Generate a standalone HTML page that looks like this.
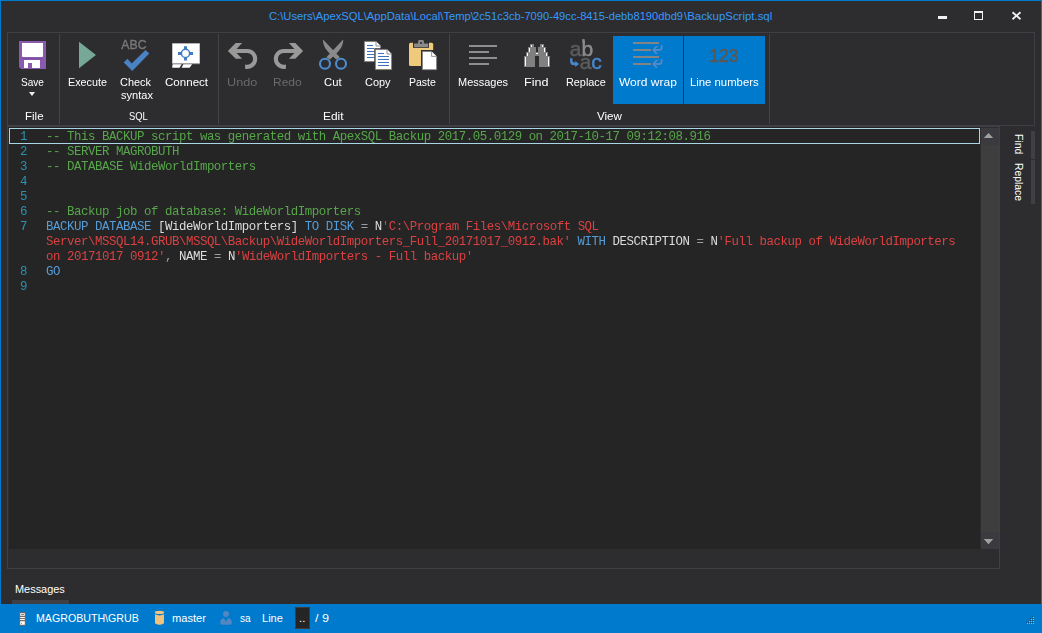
<!DOCTYPE html>
<html>
<head>
<meta charset="utf-8">
<title>BackupScript.sql</title>
<style>
*{box-sizing:border-box;margin:0;padding:0}
html,body{width:1042px;height:633px;overflow:hidden;background:#2d2d30}
body{position:relative;font-family:"Liberation Sans",sans-serif;font-size:12px;color:#f1f1f1}
.abs{position:absolute}
#frame{position:absolute;left:0;top:0;width:1042px;height:633px;border:1px solid #007acc;pointer-events:none;z-index:50}
#title{position:absolute;left:0;top:9px;width:1042px;text-align:center;color:#3399ff;font-size:12px;line-height:14px;white-space:nowrap}
#ribbon{position:absolute;left:7px;top:32px;width:1028px;height:94px;border:1px solid #3f3f46}
.sep{position:absolute;top:34px;width:1px;height:90px;background:#444447}
.lbl{position:absolute;top:75px;text-align:center;line-height:14px;font-size:12px;white-space:nowrap;transform:translateX(-50%);color:#f1f1f1}
.lbl.dis{color:#6a6a6a}
.t{position:absolute;transform-origin:0 0;line-height:14px;font-size:11.5px;white-space:nowrap;color:#fff}
.t.dis{color:#6a6a6a}
.t.w{color:#fff}
.grp{position:absolute;top:109px;text-align:center;line-height:14px;font-size:12px;transform:translateX(-50%);color:#f1f1f1}
.tog{position:absolute;top:36px;height:68px;background:#007acc}
#edwrap{position:absolute;left:7px;top:126px;width:993px;height:443px;border:1px solid #3f3f46}
#editor{position:absolute;left:9px;top:127px;width:971px;height:422px;background:#252526}
#vscroll{position:absolute;left:981px;top:128px;width:18px;height:421px;background:#3e3e3f}
#curline{position:absolute;left:9px;top:128px;width:971px;height:16px;border:1px solid #a9d6e6}
.ln,.code{position:absolute;font-family:"Liberation Mono",monospace;font-size:12.4px;letter-spacing:-0.441px;line-height:15px;white-space:pre}
.ln{left:20px;color:#2b91af}
.code{left:46px;color:#dcdcdc}
.c{color:#57a64a}.k{color:#569cd6}.s{color:#dc4141}.o{color:#9e9e9e}
#status{position:absolute;left:0;top:604px;width:1042px;height:29px;background:#007acc}
.st{position:absolute;top:611px;line-height:14px;font-size:12px;color:#fff;white-space:nowrap}
.vt{position:absolute;font-size:12px;line-height:14px;color:#f1f1f1;white-space:nowrap;transform-origin:0 0;transform:rotate(90deg)}
</style>
</head>
<body>
<span id="t_title" class="t" style="left:268.80px;top:9px;transform:scaleX(0.9744);color:#3399ff">C:\Users\ApexSQL\AppData\Local\Temp\</span>
<span id="t_title2" class="t" style="left:472.88px;top:9px;transform:scaleX(0.9691);color:#3399ff">2c51c3cb-7090-49cc-8415-debb8190dbd9</span>
<span id="t_title3" class="t" style="left:684.00px;top:9px;transform:scaleX(0.9933);color:#3399ff">\BackupScript.sql</span>

<!-- window buttons -->
<div class="abs" style="left:938px;top:16px;width:9px;height:3px;background:#f1f1f1"></div>
<div class="abs" style="left:974px;top:11px;width:9px;height:9px;border:1px solid #f1f1f1;border-top-width:2px"></div>
<svg class="abs" style="left:1011px;top:11px" width="11" height="10" viewBox="0 0 11 10"><path d="M1.5 1.2 L9.5 8.2 M9.5 1.2 L1.5 8.2" stroke="#f1f1f1" stroke-width="1.8" fill="none"/></svg>

<div id="ribbon"></div>
<div class="sep" style="left:59px"></div>
<div class="sep" style="left:218px"></div>
<div class="sep" style="left:449px"></div>
<div class="sep" style="left:769px"></div>

<div class="tog" style="left:613px;width:70px"></div>
<div class="tog" style="left:684px;width:81px"></div>

<!-- ICONS -->
<svg class="abs" style="left:0;top:0;will-change:transform" width="1042" height="130" viewBox="0 0 1042 130">
<!-- save -->
<path d="M19 41H46V69H21L19 67Z" fill="#8b59ad"/>
<path d="M22 43H43V56Q43 57 42 57H23Q22 57 22 56Z" fill="#fff"/>
<rect x="22" y="58" width="21" height="1.5" fill="#7f4fa1"/>
<rect x="24" y="60" width="16" height="8" fill="#fff"/>
<rect x="28" y="63" width="4" height="5" fill="#8b59ad"/>
<!-- execute -->
<path d="M79 41.8L96 55L79 68.2Z" fill="#76a797"/>
<!-- check syntax -->
<text x="121.3" y="48.9" font-family="Liberation Sans, sans-serif" font-size="12.4" fill="#787878" stroke="#787878" stroke-width="0.35" textLength="25.2" lengthAdjust="spacingAndGlyphs">ABC</text>
<path d="M123.7 62.4L127.4 58.8L131.7 63.6L145.5 49.9L149.3 53.4L132.2 71.1Z" fill="#4a82c3"/>
<!-- connect -->
<rect x="172" y="43.1" width="28" height="21.1" fill="#8c8c8c"/>
<rect x="172.5" y="43.6" width="27" height="19.6" fill="#fff"/>
<path d="M172.6 64.3H181.6L179.6 67.7H172.2Z" fill="#fff"/>
<path d="M183.4 64.3H192.2L189.6 67.7H181.6Z" fill="#fff"/>
<circle cx="185.5" cy="53.4" r="4.1" fill="none" stroke="#3f7cc0" stroke-width="1.5"/>
<path d="M184 46.2h3v3.4h-3zM184 57.2h3v3.4h-3zM178 52h3.6v3h-3.6zM189.4 52h3.6v3h-3.6z" fill="#3f7cc0"/>
<!-- undo -->
<path id="undo" d="M227.9 50.9L235.7 43.1H242.1L236.6 48.9H247.2A10 10 0 1 1 245.1 68.68V64.41A5.9 5.9 0 1 0 247.2 53H236.6L242.1 58.8H235.7Z" fill="#999"/>
<!-- redo -->
<path d="M227.9 50.9L235.7 43.1H242.1L236.6 48.9H247.2A10 10 0 1 1 245.1 68.68V64.41A5.9 5.9 0 1 0 247.2 53H236.6L242.1 58.8H235.7Z" fill="#999" transform="translate(531 0) scale(-1 1)"/>
<!-- cut -->
<path d="M323.2 39.7L339.9 57.2L336.3 59.4L330.1 53.7C326.5 50.4 323.2 46 322.9 39.9Z" fill="#8a8a8a"/>
<path d="M343.0 39.7L326.3 57.2L329.9 59.4L336.1 53.7C339.7 50.4 343.0 46 343.3 39.9Z" fill="#8a8a8a"/>
<circle cx="325" cy="63.7" r="5" fill="none" stroke="#4b8dd2" stroke-width="2.1"/>
<circle cx="341" cy="63.7" r="5" fill="none" stroke="#4b8dd2" stroke-width="2.1"/>
<!-- copy -->
<g stroke="#7a7a7a" stroke-width="0.8" fill="#fff">
<path d="M364.4 41.4H376L380.6 46V61.6H364.4Z"/><path d="M376 41.4V46H380.6" fill="#fff"/>
</g>
<path d="M367 45h6v1h-6zM367 48h7v1h-7zM367 51h7v1h-7zM367 54h7v1h-7zM367 57h7v1h-7z" fill="#3b74ba"/>
<path d="M374.3 48.3H387.4L392.7 53.6V70.7H374.3Z" fill="#2d2d30"/>
<g stroke="#7a7a7a" stroke-width="0.8" fill="#fff">
<path d="M375.4 49.4H387L391.6 54V69.6H375.4Z"/><path d="M387 49.4V54H391.6" fill="#fff"/>
</g>
<path d="M378 53h6v1h-6zM378 56h11v1h-11zM378 59h11v1h-11zM378 62h11v1h-11zM378 65h11v1h-11z" fill="#3b74ba"/>
<!-- paste -->
<rect x="409" y="42.7" width="24.2" height="23.3" rx="1.6" fill="#efc97c"/>
<rect x="413" y="40" width="16" height="7.8" fill="#2d2d30"/>
<rect x="414" y="43.5" width="14.2" height="3.6" rx="0.6" fill="#8a8a8a"/>
<path d="M418.1 44V41.4Q418.1 40 419.5 40H422.5Q423.9 40 423.9 41.4V44Z" fill="#8a8a8a"/>
<rect x="420.1" y="42" width="1.8" height="1.8" fill="#2d2d30"/>
<rect x="421" y="50" width="17" height="21" fill="#2d2d30"/>
<g stroke="#7a7a7a" stroke-width="0.8" fill="#fff">
<path d="M422.4 51.4H431.6L436.6 56.4V69.7H422.4Z"/><path d="M431.6 51.4V56.4H436.6"/>
</g>
<!-- messages -->
<path d="M469 45h28v2h-28zM469 51h20v2h-20zM469 57h28v2h-28zM469 63h20v2h-20z" fill="#8e8e8e"/>
<!-- find -->
<g fill="#808080">
<path d="M530 44h4v3h2v5.2h0V56h-1v11H524V56h2v-4h2v-5h2z"/>
<path d="M540 44h4v3h2v5h2v4h2v11H539V56h-1v-9h2z"/>
<rect x="535" y="52" width="4" height="4"/>
</g>
<path d="M525 57h1v9h-1zM527 53h1v3h-1zM529 48h1v4h-1zM531 45h1v2h-1zM548 57h1v9h-1zM546 53h1v3h-1zM544 48h1v4h-1zM542 45h1v2h-1zM536 53h2v1h-2z" fill="#fff"/>
<!-- replace -->
<g font-family="Liberation Sans, sans-serif" font-size="21" stroke-width="0.5">
<text x="569.8" y="55.5" fill="#5c5c5c" stroke="#5c5c5c">a</text><text x="581.4" y="55.5" fill="#8c8c8c" stroke="#8c8c8c">b</text>
<text x="579.8" y="68.7" fill="#5c5c5c" stroke="#5c5c5c">a</text><text x="591.2" y="68.7" fill="#4688cd" stroke="#4688cd">c</text>
</g>
<path d="M570.1 58.2h2.4v2.6q0 1.8 1.8 1.8h0.9v-1.7l3.9 3l-3.9 3v-1.7h-1.4q-3.7 0-3.7-3.7z" fill="#4688cd"/>
<rect x="582.3" y="39.1" width="2.3" height="3.2" fill="#8c8c8c"/>
<!-- word wrap -->
<path d="M633 42h26v2h-26zM633 49h18v2h-18zM633 56h26v2h-26zM633 63h18v2h-18z" fill="#848484"/>
<path id="wa" d="M652.1 50L655.7 46.1H658L655.5 49.1H659Q660.8 49.1 660.8 47.2V45H662.6V47.4Q662.6 50.9 659 50.9H655.5L658 53.9H655.7Z" fill="#5288c6"/>
<path d="M652.1 50L655.7 46.1H658L655.5 49.1H659Q660.8 49.1 660.8 47.2V45H662.6V47.4Q662.6 50.9 659 50.9H655.5L658 53.9H655.7Z" fill="#5288c6" transform="translate(0 14)"/>
<!-- 123 -->
<text x="709.3" y="61.8" font-family="Liberation Sans, sans-serif" font-size="17.6" fill="#5a5856" stroke="#5a5856" stroke-width="0.55" textLength="29" lengthAdjust="spacingAndGlyphs">123</text>
</svg>


<!-- labels -->
<div class="abs" style="left:29px;top:92px;width:0;height:0;border-left:3.5px solid transparent;border-right:3.5px solid transparent;border-top:4px solid #f1f1f1"></div>
<span id="t_save" class="t" style="left:20.54px;top:75px;transform:scaleX(0.8716)">Save</span>
<span id="t_exec" class="t" style="left:67.96px;top:75px;transform:scaleX(0.9381)">Execute</span>
<span id="t_check" class="t" style="left:119.52px;top:75px;transform:scaleX(0.9497)">Check</span>
<span id="t_syntax" class="t" style="left:120.59px;top:88px;transform:scaleX(0.9623)">syntax</span>
<span id="t_connect" class="t" style="left:164.52px;top:75px;transform:scaleX(1.0058)">Connect</span>
<span id="t_undo" class="t dis" style="left:227.15px;top:75px;transform:scaleX(1.1009)">Undo</span>
<span id="t_redo" class="t dis" style="left:273.12px;top:75px;transform:scaleX(1.0414)">Redo</span>
<span id="t_cut" class="t" style="left:324.30px;top:75px;transform:scaleX(0.9787)">Cut</span>
<span id="t_copy" class="t" style="left:365.36px;top:75px;transform:scaleX(0.9518)">Copy</span>
<span id="t_paste" class="t" style="left:409.31px;top:75px;transform:scaleX(0.9141)">Paste</span>
<span id="t_msgs" class="t" style="left:457.88px;top:75px;transform:scaleX(0.9535)">Messages</span>
<span id="t_find" class="t" style="left:523.92px;top:75px;transform:scaleX(1.0958)">Find</span>
<span id="t_repl" class="t" style="left:565.53px;top:75px;transform:scaleX(0.9429)">Replace</span>
<span id="t_wrap" class="t" style="left:619.25px;top:75px;transform:scaleX(1.0439)">Word wrap</span>
<span id="t_lnum" class="t" style="left:690.0px;top:75px;transform:scaleX(0.9853)">Line numbers</span>
<span id="t_gfile" class="t" style="left:24.50px;top:109px;transform:scaleX(1.0023)">File</span>
<span id="t_gsql" class="t" style="left:129.43px;top:109px;transform:scaleX(0.8167)">SQL</span>
<span id="t_gedit" class="t" style="left:323.39px;top:109px;transform:scaleX(1.0346)">Edit</span>
<span id="t_gview" class="t" style="left:597.05px;top:109px;transform:scaleX(1.0092)">View</span>

<!-- editor -->
<div id="edwrap"></div>
<div id="editor"></div>
<div id="vscroll"></div>
<div class="abs" style="left:981px;top:128px;width:18px;height:17px;background:#3b3b3f"></div>
<div class="abs" style="left:981px;top:532px;width:18px;height:17px;background:#3b3b3f"></div>
<svg class="abs" style="left:980px;top:128px" width="18" height="421"><path d="M3.8 10L8.5 5L13.2 10Z" fill="#a0a0a0"/><path d="M3.8 411L8.5 416.2L13.2 411Z" fill="#a0a0a0"/></svg>
<div id="curline"></div>

<div class="ln" style="top:130px">1
2
3
4
5
6
7


8
9</div>
<div class="code" style="top:130px"><span class="c">-- This BACKUP script was generated with ApexSQL Backup 2017.05.0129 on 2017-10-17 09:12:08.916</span>
<span class="c">-- SERVER MAGROBUTH</span>
<span class="c">-- DATABASE WideWorldImporters</span>


<span class="c">-- Backup job of database: WideWorldImporters</span>
<span class="k">BACKUP DATABASE</span> [WideWorldImporters] <span class="k">TO DISK</span> <span class="o">=</span> N<span class="s">'C:\Program Files\Microsoft SQL</span>
<span class="s">Server\MSSQL14.GRUB\MSSQL\Backup\WideWorldImporters_Full_20171017_0912.bak'</span> <span class="k">WITH</span> DESCRIPTION <span class="o">=</span> N<span class="s">'Full backup of WideWorldImporters</span>
<span class="s">on 20171017 0912'</span><span class="o">,</span> NAME <span class="o">=</span> N<span class="s">'WideWorldImporters - Full backup'</span>
<span class="k">GO</span>
</div>

<!-- right side panel -->
<span class="t" style="left:1026.1px;top:133.7px;transform:rotate(90deg) scaleX(0.91)">Find</span>
<span class="t" style="left:1026.1px;top:163.1px;transform:rotate(90deg) scaleX(0.90)">Replace</span>
<div class="abs" style="left:1031px;top:131px;width:4px;height:28px;background:#3f3f46"></div>
<div class="abs" style="left:1031px;top:160px;width:4px;height:44px;background:#3f3f46"></div>

<!-- bottom -->
<span id="t_tabmsg" class="t" style="left:15.11px;top:582px;transform:scaleX(0.9498)">Messages</span>
<div class="abs" style="left:12px;top:600px;width:57px;height:4px;background:#3f3f46"></div>
<div id="status"></div>
<span id="t_srv" class="t w" style="left:35.75px;top:611px;transform:scaleX(0.9241)">MAGROBUTH\GRUB</span>
<span id="t_master" class="t w" style="left:172.25px;top:611px;transform:scaleX(0.9674)">master</span>
<span id="t_sa" class="t w" style="left:239.58px;top:611px;transform:scaleX(0.8774)">sa</span>
<span id="t_line" class="t w" style="left:261.82px;top:611px;transform:scaleX(0.9580)">Line</span>
<div class="abs" style="left:295px;top:607px;width:15px;height:22px;background:#252526;border:1px solid #433b38"></div>
<span id="t_dots" class="t w" style="left:299.29px;top:611px;transform:scaleX(0.9830)">..</span>
<span id="t_of9" class="t w" style="left:315.20px;top:611px;transform:scaleX(1.0991)">/ 9</span>

<svg class="abs" style="left:0;top:604px" width="1042" height="29" viewBox="0 604 1042 29">
<!-- server -->
<rect x="19.2" y="612.2" width="6.6" height="13.6" fill="#786a62"/>
<path d="M20.2 613.2h4.6v2.5h-4.6zM20.2 616.9h4.6v1.1h-4.6zM20.2 619h4.6v1.1h-4.6zM20.2 621.2h4.6v3.6h-4.6z" fill="#fff"/>
<rect x="21" y="614.1" width="3" height="0.7" fill="#555"/>
<rect x="21.1" y="623" width="0.9" height="0.9" fill="#3f9a62"/>
<!-- db -->
<ellipse cx="159.5" cy="612.4" rx="4.6" ry="1.55" fill="#f6c57c"/>
<path d="M155 614.3Q159.5 616.6 164 614.3V623.2Q159.5 626.4 155 623.2Z" fill="#efc37f"/>
<!-- user -->
<circle cx="226" cy="613.9" r="3" fill="#5287c1"/>
<path d="M220.2 622.8Q220.2 619.4 223.6 618.1L226 621.6L228.4 618.1Q231.9 619.4 231.9 622.8Q231.9 624.8 230 624.8H222.1Q220.2 624.8 220.2 622.8Z" fill="#5287c1"/>
<!-- grip -->
<path d="M1032 616h1v1h-1zM1030 618h1v1h-1zM1032 618h1v1h-1zM1028 620h1v1h-1zM1030 620h1v1h-1zM1032 620h1v1h-1zM1026 622h1v1h-1zM1028 622h1v1h-1zM1030 622h1v1h-1zM1032 622h1v1h-1z" fill="#1b527c"/>
<path d="M1033 617h1v1h-1zM1031 619h1v1h-1zM1033 619h1v1h-1zM1029 621h1v1h-1zM1031 621h1v1h-1zM1033 621h1v1h-1zM1027 623h1v1h-1zM1029 623h1v1h-1zM1031 623h1v1h-1zM1033 623h1v1h-1z" fill="#86bbe8"/>
</svg>
<div id="frame"></div>
</body>
</html>
